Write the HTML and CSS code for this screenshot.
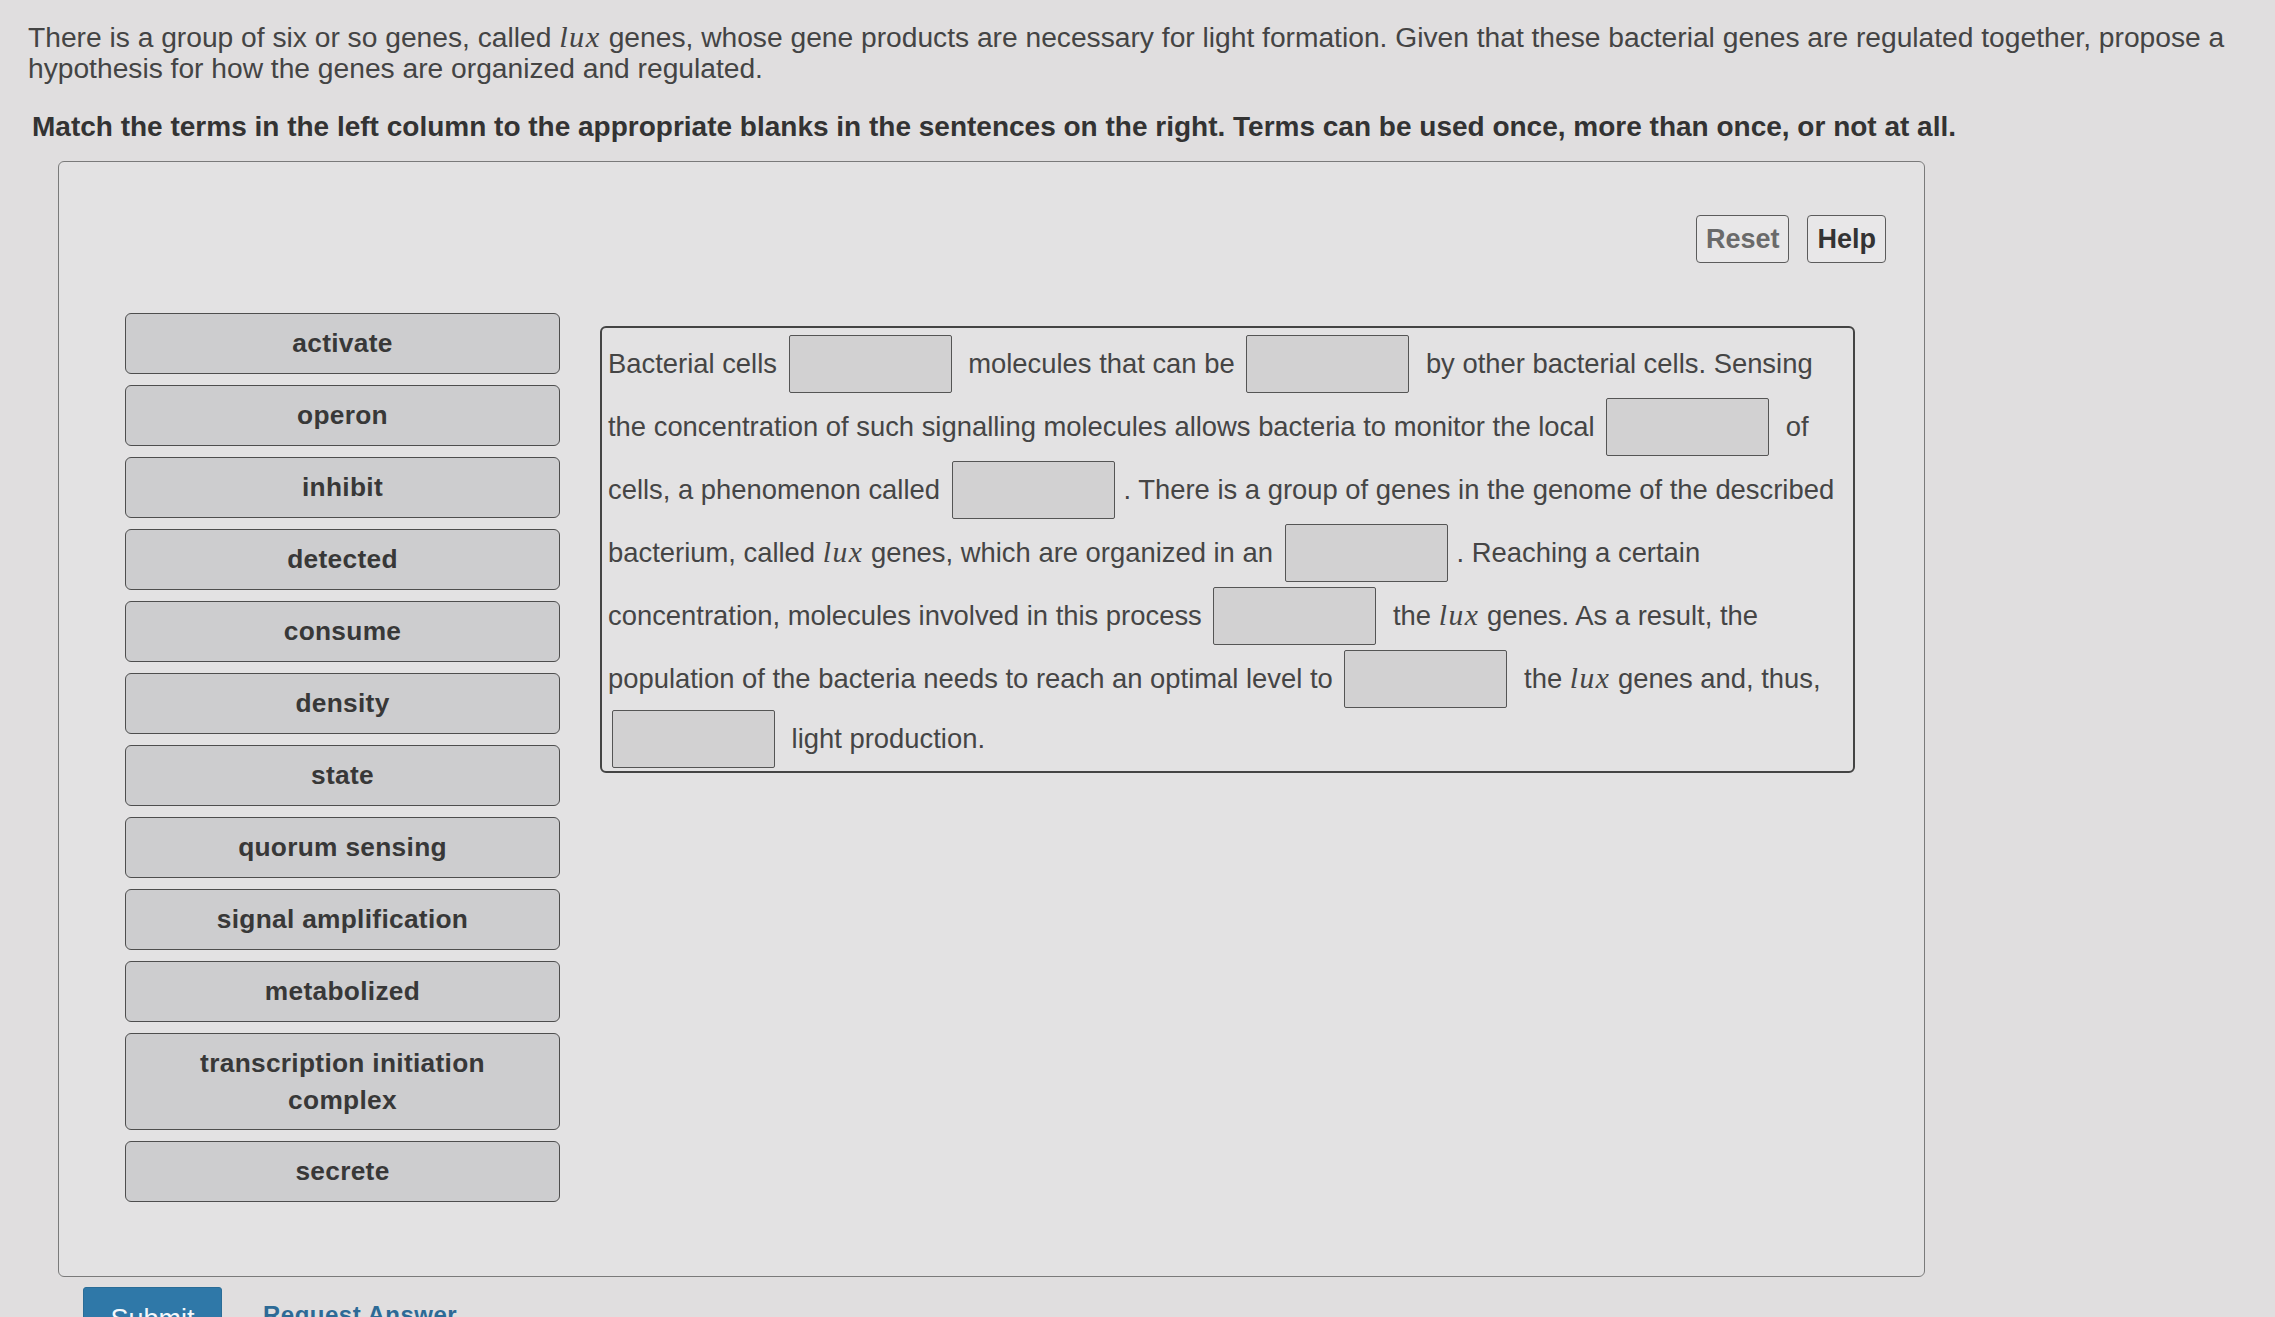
FILE: index.html
```html
<!DOCTYPE html>
<html lang="en">
<head>
<meta charset="utf-8">
<title>Quorum sensing matching</title>
<link rel="stylesheet" href="styles.css">
</head>
<body>
<div class="page">
  <p class="intro">There is a group of six or so genes, called <span class="math">lux</span> genes, whose gene products are necessary for light formation. Given that these bacterial genes are regulated together, propose a<br>hypothesis for how the genes are organized and regulated.</p>
  <p class="instr">Match the terms in the left column to the appropriate blanks in the sentences on the right. Terms can be used once, more than once, or not at all.</p>

  <div class="card">
    <div class="toolbar">
      <button class="tool-btn reset">Reset</button>
      <button class="tool-btn help">Help</button>
    </div>
    <div class="work">
      <div class="terms">
        <div class="term">activate</div>
        <div class="term">operon</div>
        <div class="term">inhibit</div>
        <div class="term">detected</div>
        <div class="term">consume</div>
        <div class="term">density</div>
        <div class="term">state</div>
        <div class="term">quorum sensing</div>
        <div class="term">signal amplification</div>
        <div class="term">metabolized</div>
        <div class="term tall">transcription initiation<br>complex</div>
        <div class="term">secrete</div>
      </div>
      <div class="sentences">
        <div class="line">Bacterial cells <span class="blank"></span> molecules that can be <span class="blank"></span> by other bacterial cells. Sensing</div>
        <div class="line">the concentration of such signalling molecules allows bacteria to monitor the local <span class="blank"></span> of</div>
        <div class="line">cells, a phenomenon called <span class="blank"></span>. There is a group of genes in the genome of the described</div>
        <div class="line">bacterium, called <span class="math">lux</span> genes, which are organized in an <span class="blank"></span>. Reaching a certain</div>
        <div class="line">concentration, molecules involved in this process <span class="blank"></span> the <span class="math">lux</span> genes. As a result, the</div>
        <div class="line">population of the bacteria needs to reach an optimal level to <span class="blank"></span> the <span class="math">lux</span> genes and, thus,</div>
        <div class="line"><span class="blank first"></span> light production.</div>
      </div>
    </div>
  </div>

  <div class="actions">
    <button class="submit">Submit</button>
    <a class="request" href="#">Request Answer</a>
  </div>
</div>
</body>
</html>
```
FILE: styles.css
```css
html, body {
  margin: 0;
  padding: 0;
  overflow: hidden;
  height: 100%;
}
body {
  background: #e0dedf;
  font-family: "Liberation Sans", Arial, sans-serif;
  color: #3e3e3e;
}
.page {
  padding: 22px 20px 0 28px;
}
.intro {
  margin: 0;
  font-size: 28.2px;
  line-height: 31px;
  color: #444;
  white-space: nowrap;
}
.math {
  font-family: "Liberation Serif", "Times New Roman", serif;
  font-style: italic;
  font-size: 1.08em;
  letter-spacing: 1.5px;
}
.instr {
  margin: 27px 0 0 4px;
  font-size: 28px;
  line-height: 31px;
  font-weight: bold;
  color: #333;
  white-space: nowrap;
}
.card {
  margin: 19px 0 0 30px;
  width: 1867px;
  height: 1116px;
  box-sizing: border-box;
  border: 1.5px solid #7a7a7a;
  border-radius: 6px;
  background: #e3e2e3;
}
.toolbar {
  display: flex;
  justify-content: flex-end;
  gap: 18px;
  padding: 53px 38px 0 0;
}
.tool-btn {
  height: 48px;
  padding: 0 9px;
  font-family: "Liberation Sans", Arial, sans-serif;
  font-size: 27px;
  font-weight: bold;
  background: #e8e7e8;
  border: 1.5px solid #5c5c5c;
  border-radius: 4px;
}
.reset { color: #6a6a6a; }
.help { color: #333; }
.work {
  display: flex;
  align-items: flex-start;
  margin-top: 50px;
  padding-left: 66px;
}
.terms {
  display: flex;
  flex-direction: column;
  gap: 11px;
  width: 435px;
}
.term {
  min-height: 61px;
  box-sizing: border-box;
  display: flex;
  align-items: center;
  justify-content: center;
  text-align: center;
  background: #cdcdcf;
  border: 1.5px solid #4e4e4e;
  border-radius: 6px;
  font-size: 26.3px;
  line-height: 37px;
  font-weight: bold;
  color: #383838;
  letter-spacing: 0.3px;
}
.term.tall {
  min-height: 97px;
}
.sentences {
  margin: 13px 0 0 40px;
  width: 1255px;
  box-sizing: border-box;
  border: 2px solid #444;
  border-radius: 6px;
  padding: 4px 6px 3px 6px;
  background: #e3e2e3;
}
.line {
  height: 63px;
  line-height: 63px;
  white-space: nowrap;
  font-size: 27.4px;
  color: #454545;
}
.line:last-child {
  height: 58px;
  line-height: 58px;
}
.blank {
  display: inline-block;
  width: 163px;
  height: 58px;
  box-sizing: border-box;
  vertical-align: middle;
  margin: -4px 9px 0 4px;
  background: #d2d1d2;
  border: 1.5px solid #555;
  border-radius: 2px;
}
.blank.first {
  margin-left: 4px;
}
.actions {
  display: flex;
  align-items: flex-start;
  gap: 41px;
  margin: 10px 0 0 55px;
}
.submit {
  width: 139px;
  height: 52px;
  background: #2f78a8;
  color: #f4f8fb;
  border: 1px solid #2a6c97;
  border-radius: 3px;
  font-family: "Liberation Sans", Arial, sans-serif;
  font-size: 27px;
  padding: 12px 0 0 0;
}
.request {
  color: #2d6a96;
  font-size: 24px;
  font-weight: bold;
  text-decoration: none;
  padding-top: 14px;
  letter-spacing: 0.5px;
}
```
